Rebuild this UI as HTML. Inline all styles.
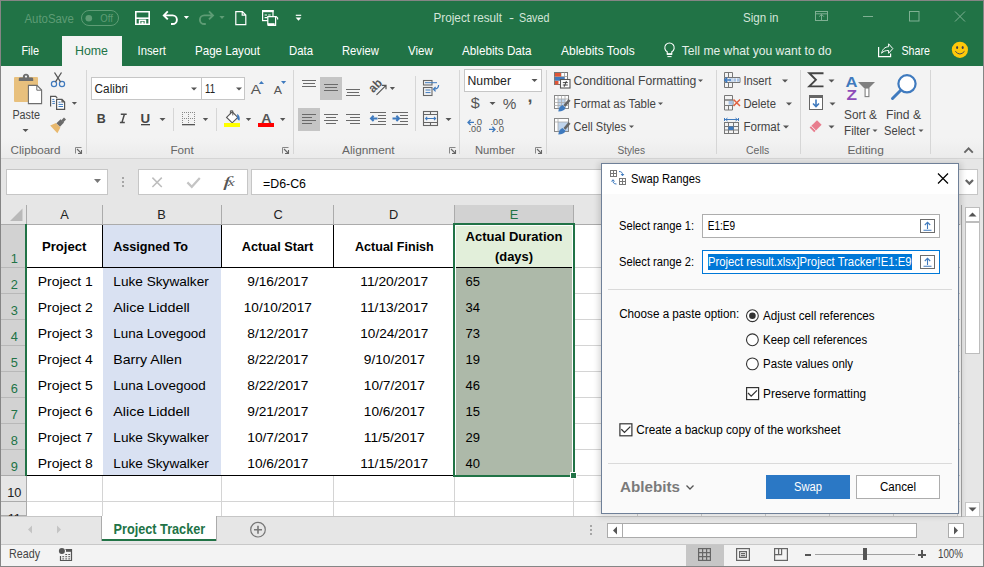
<!DOCTYPE html>
<html><head><meta charset="utf-8"><title>Excel - Swap Ranges</title>
<style>html,body{margin:0;padding:0;background:#fff;overflow:hidden}svg{display:block}text{font-family:"Liberation Sans",sans-serif;white-space:pre}</style>
</head><body>
<svg width="984" height="567" viewBox="0 0 984 567" shape-rendering="auto">
<rect x="0" y="0" width="984" height="567" fill="#858585" />
<rect x="1" y="1" width="982" height="65" fill="#217346" />
<text x="24.5" y="22.9" font-size="12.2" fill="#5E9C75" textLength="49.4" lengthAdjust="spacingAndGlyphs" >AutoSave</text>
<rect x="81.5" y="10.5" width="37" height="15" rx="7.5" fill="none" stroke="#5E9C75" stroke-width="1"/>
<circle cx="88.8" cy="18.2" r="3.3" fill="#5E9C75"/>
<text x="100.2" y="21.8" font-size="10" fill="#5E9C75" textLength="12.6" lengthAdjust="spacingAndGlyphs" >Off</text>
<g fill="none" stroke="#fff" stroke-width="1.6"><path d="M135.8 11.8h13.4v12.4h-13.4z"/><path d="M135.8 18.2h13.4"/><path d="M139.6 24.2v-4h5.8v4"/></g><rect x="141.4" y="21.6" width="2.2" height="2.6" fill="#fff"/>
<path d="M167.8 11.4 l-4 4 l4 4 M164 15.4 h8.6 a4.3 4.3 0 0 1 0 8.6 h-1.6" fill="none" stroke="#fff" stroke-width="1.9"/>
<path d="M183.8 16h5.2l-2.6 3z" fill="#fff"/>
<path d="M209 11.4 l4 4 l-4 4 M212.8 15.4 h-8.6 a4.3 4.3 0 0 0 0 8.6 h1.6" fill="none" stroke="#5E9C75" stroke-width="1.9"/>
<path d="M219.4 16h5.2l-2.6 3z" fill="#5E9C75"/>
<path d="M235.8 11.6h6.6l3.4 3.4v9.6h-10z M242.2 11.6v3.6h3.6" fill="none" stroke="#fff" stroke-width="1.2"/>
<g fill="none" stroke="#fff" stroke-width="1.2"><rect x="262.6" y="10.6" width="10.4" height="10"/><path d="M264.6 15h2.5 M268.2 15h2.5 M264.6 17.6h3"/></g><rect x="262" y="10" width="11.6" height="2.2" fill="#fff"/><path d="M267.8 24.8v-8.2h8.4l1.4 1.4v1.4" fill="#217346" stroke="#fff" stroke-width="1.2"/><path d="M275.6 17v8.4h-8" fill="none" stroke="#fff" stroke-width="1.2"/><rect x="267.6" y="23.2" width="7" height="2.2" fill="#fff"/>
<path d="M295.8 15.3h5.4" stroke="#fff" stroke-width="1.2"/><path d="M295.6 17.6h5.8l-2.9 3.2z" fill="#fff"/>
<text x="433.5" y="21.8" font-size="12.4" fill="#D3E5D9" textLength="68.5" lengthAdjust="spacingAndGlyphs" >Project result</text>
<text x="509" y="21.8" font-size="12.4" fill="#D3E5D9" textLength="5" lengthAdjust="spacingAndGlyphs" >-</text>
<text x="519" y="21.8" font-size="12.4" fill="#D3E5D9" textLength="30.4" lengthAdjust="spacingAndGlyphs" >Saved</text>
<text x="743" y="21.5" font-size="12.4" fill="#D3E5D9" textLength="35.5" lengthAdjust="spacingAndGlyphs" >Sign in</text>
<g fill="none" stroke="#7FB093" stroke-width="1"><rect x="815.5" y="11.5" width="12" height="9"/><path d="M815.5 13.8h12 M821.5 20.5v-6.2 M819.2 16.6l2.3-2.3 2.3 2.3"/></g>
<path d="M863 16.5h10" stroke="#7FB093" stroke-width="1"/>
<rect x="909.5" y="11.5" width="9.5" height="9.5" fill="none" stroke="#7FB093" stroke-width="1"/>
<path d="M955 11.5l10 10 M965 11.5l-10 10" stroke="#7FB093" stroke-width="1"/>
<rect x="62" y="36" width="60" height="30" fill="#F3F3F3" />
<text x="21.4" y="55.1" font-size="13" fill="#FFFFFF" textLength="17.6" lengthAdjust="spacingAndGlyphs" >File</text>
<text x="137.5" y="55.1" font-size="13" fill="#FFFFFF" textLength="28.3" lengthAdjust="spacingAndGlyphs" >Insert</text>
<text x="195" y="55.1" font-size="13" fill="#FFFFFF" textLength="65" lengthAdjust="spacingAndGlyphs" >Page Layout</text>
<text x="289" y="55.1" font-size="13" fill="#FFFFFF" textLength="24" lengthAdjust="spacingAndGlyphs" >Data</text>
<text x="342" y="55.1" font-size="13" fill="#FFFFFF" textLength="36.8" lengthAdjust="spacingAndGlyphs" >Review</text>
<text x="408" y="55.1" font-size="13" fill="#FFFFFF" textLength="24.8" lengthAdjust="spacingAndGlyphs" >View</text>
<text x="462" y="55.1" font-size="13" fill="#FFFFFF" textLength="69.6" lengthAdjust="spacingAndGlyphs" >Ablebits Data</text>
<text x="561" y="55.1" font-size="13" fill="#FFFFFF" textLength="73.7" lengthAdjust="spacingAndGlyphs" >Ablebits Tools</text>
<text x="75" y="55.1" font-size="13" fill="#217346" textLength="33" lengthAdjust="spacingAndGlyphs" >Home</text>
<g fill="none" stroke="#fff" stroke-width="1.1"><path d="M667.2 54.2v-2.4a4.7 4.7 0 1 1 4.6 0v2.4z"/></g><rect x="667" y="53.2" width="5" height="1.6" fill="#fff"/><path d="M667.4 56.6h4.2" stroke="#fff" stroke-width="1"/>
<text x="681.8" y="55.1" font-size="13" fill="#E4EFE8" textLength="149.8" lengthAdjust="spacingAndGlyphs" >Tell me what you want to do</text>
<g fill="none" stroke="#fff"><path d="M878.6 47v9.6h12v-3.2" stroke-width="1.2"/><path d="M881.6 53.2C882.6 49 885 46.9 888.6 46.7V43.8L892.8 48.6 888.6 53.3V50.5C885.6 50.4 883.2 51.3 881.6 53.2z" stroke-width="1"/></g>
<text x="901.5" y="55.1" font-size="13" fill="#FFFFFF" textLength="28.5" lengthAdjust="spacingAndGlyphs" >Share</text>
<circle cx="959.9" cy="49.8" r="8.1" fill="#FFC80A"/><ellipse cx="957.1" cy="47.6" rx="1" ry="1.5" fill="#3C3C50"/><ellipse cx="962.7" cy="47.6" rx="1" ry="1.5" fill="#3C3C50"/><path d="M955.3 51.3q4.6 5.4 9.2 0" fill="none" stroke="#4A4A50" stroke-width="1"/>
<rect x="1" y="66" width="982" height="92" fill="#F3F3F3" />
<defs><linearGradient id="rg" x1="0" y1="0" x2="0" y2="1"><stop offset="0" stop-color="#F3F3F3"/><stop offset="1" stop-color="#EBEBEB"/></linearGradient></defs><rect x="1" y="138" width="982" height="20" fill="url(#rg)"/>
<rect x="1" y="158" width="982" height="1" fill="#D5D5D5" />
<rect x="86" y="70" width="1" height="84" fill="#D6D6D6" />
<rect x="293" y="70" width="1" height="84" fill="#D6D6D6" />
<rect x="459" y="70" width="1" height="84" fill="#D6D6D6" />
<rect x="546" y="70" width="1" height="84" fill="#D6D6D6" />
<rect x="716" y="70" width="1" height="84" fill="#D6D6D6" />
<rect x="800" y="70" width="1" height="84" fill="#D6D6D6" />
<rect x="930" y="70" width="1" height="84" fill="#D6D6D6" />
<rect x="14" y="77" width="24" height="25" fill="#E8C07D" rx="1"/>
<path d="M18.8 81v-2.2q0-1.4 1.4-1.4h2.6q0-3.6 3.2-3.6t3.2 3.6h2.6q1.4 0 1.4 1.4v2.2z" fill="#6D6D6D"/><circle cx="26" cy="76.6" r="1.1" fill="#F3F3F3"/>
<path d="M28.4 85.4h8.6l4.6 4.6v13.6h-13.2z" fill="#FFFFFF" stroke="#6D6D6D" stroke-width="1.1"/><path d="M36.8 85.6v4.6h4.6" fill="none" stroke="#6D6D6D" stroke-width="1"/>
<text x="12.4" y="118.7" font-size="12.5" fill="#444444" textLength="27.6" lengthAdjust="spacingAndGlyphs" >Paste</text>
<path d="M22.5 129h6l-3 3z" fill="#555"/>
<g fill="none" stroke="#3F7ABE" stroke-width="1.2"><circle cx="54" cy="84" r="2.6"/><circle cx="62" cy="84" r="2.6"/></g><path d="M55.5 81.8 L61.5 72.5 M60.5 81.8 L54.5 72.5" stroke="#555" stroke-width="1.3"/>
<path d="M50.6 106.4v-10h5l1.6 1.6" fill="#fff" stroke="#555" stroke-width="1.2"/><path d="M56.6 109.4v-10h5.4l2.6 2.6v7.4z M62 99.4v2.6h2.6" fill="#fff" stroke="#555" stroke-width="1.2"/>
<path d="M52.3 99.4h2 M52.3 101.4h2.6 M52.3 103.4h2.6 M58.5 102.2h2 M58.5 104.4h4.6 M58.5 106.5h4.6" stroke="#3F7ABE" stroke-width="1"/>
<path d="M71.8 102h5.2l-2.6 2.8z" fill="#555"/>
<path d="M50.2 125.6l5.8-2.6 4.4 4.4-3 5.8z" fill="#E8B86D"/><path d="M56.4 123.2l4.2-4 3.4 3.4-4 4.2z" fill="#6A6A6A"/><path d="M61.4 120.2l2.6-2.6 2 2-2.6 2.6z" fill="#6A6A6A"/>
<text x="10.6" y="153.9" font-size="11.7" fill="#666666" textLength="49.9" lengthAdjust="spacingAndGlyphs" >Clipboard</text>
<path d="M75.5 153.5v-6h6" fill="none" stroke="#888" stroke-width="1"/><path d="M77 149l4 4 M81.5 150v3.5h-3.5" fill="none" stroke="#666" stroke-width="1.1"/>
<rect x="91.5" y="77.5" width="110" height="22" fill="#FFFFFF" stroke="#C6C6C6" stroke-width="1" />
<rect x="201.5" y="77.5" width="43" height="22" fill="#FFFFFF" stroke="#C6C6C6" stroke-width="1" />
<text x="94.6" y="93" font-size="12.5" fill="#222" textLength="33.4" lengthAdjust="spacingAndGlyphs" >Calibri</text>
<path d="M191 87.5h6l-3 3z" fill="#555"/>
<text x="205" y="93" font-size="12.5" fill="#222" textLength="10" lengthAdjust="spacingAndGlyphs" >11</text>
<path d="M236 87.5h6l-3 3z" fill="#555"/>
<text x="250.8" y="93.8" font-size="13.6" fill="#555" textLength="10.2" lengthAdjust="spacingAndGlyphs" >A</text>
<path d="M258.8 84h5.2l-2.6-3z" fill="#3F7ABE"/>
<text x="273.8" y="93.8" font-size="10.8" fill="#555" textLength="8.2" lengthAdjust="spacingAndGlyphs" >A</text>
<path d="M281 81h5.2l-2.6 3z" fill="#3F7ABE"/>
<text x="96.8" y="123.2" font-size="13" fill="#444" font-weight="700" textLength="9" lengthAdjust="spacingAndGlyphs" >B</text>
<path d="M120.8 114.2h5.9 M119.9 122.6h4.9 M124.4 114.2l-2.5 8.4" fill="none" stroke="#4A4A4A" stroke-width="1.5"/>
<text x="140.6" y="122.6" font-size="13" fill="#444" font-weight="700" textLength="9.6" lengthAdjust="spacingAndGlyphs" >U</text>
<rect x="141" y="124" width="9" height="1.3" fill="#444" />
<path d="M159.5 118h6l-3 3z" fill="#555"/>
<rect x="173" y="108" width="1" height="23" fill="#D6D6D6" />
<rect x="182" y="112" width="1" height="1" fill="#8A8A8A" />
<rect x="184" y="112" width="1" height="1" fill="#8A8A8A" />
<rect x="186" y="112" width="1" height="1" fill="#8A8A8A" />
<rect x="188" y="112" width="1" height="1" fill="#8A8A8A" />
<rect x="190" y="112" width="1" height="1" fill="#8A8A8A" />
<rect x="192" y="112" width="1" height="1" fill="#8A8A8A" />
<rect x="194" y="112" width="1" height="1" fill="#8A8A8A" />
<rect x="182" y="114" width="1" height="1" fill="#8A8A8A" />
<rect x="188" y="114" width="1" height="1" fill="#8A8A8A" />
<rect x="194" y="114" width="1" height="1" fill="#8A8A8A" />
<rect x="182" y="116" width="1" height="1" fill="#8A8A8A" />
<rect x="188" y="116" width="1" height="1" fill="#8A8A8A" />
<rect x="194" y="116" width="1" height="1" fill="#8A8A8A" />
<rect x="182" y="118" width="1" height="1" fill="#8A8A8A" />
<rect x="184" y="118" width="1" height="1" fill="#8A8A8A" />
<rect x="186" y="118" width="1" height="1" fill="#8A8A8A" />
<rect x="188" y="118" width="1" height="1" fill="#8A8A8A" />
<rect x="190" y="118" width="1" height="1" fill="#8A8A8A" />
<rect x="192" y="118" width="1" height="1" fill="#8A8A8A" />
<rect x="194" y="118" width="1" height="1" fill="#8A8A8A" />
<rect x="182" y="120" width="1" height="1" fill="#8A8A8A" />
<rect x="188" y="120" width="1" height="1" fill="#8A8A8A" />
<rect x="194" y="120" width="1" height="1" fill="#8A8A8A" />
<rect x="182" y="122" width="1" height="1" fill="#8A8A8A" />
<rect x="188" y="122" width="1" height="1" fill="#8A8A8A" />
<rect x="194" y="122" width="1" height="1" fill="#8A8A8A" />
<rect x="182" y="124" width="1" height="1" fill="#8A8A8A" />
<rect x="184" y="124" width="1" height="1" fill="#8A8A8A" />
<rect x="186" y="124" width="1" height="1" fill="#8A8A8A" />
<rect x="188" y="124" width="1" height="1" fill="#8A8A8A" />
<rect x="190" y="124" width="1" height="1" fill="#8A8A8A" />
<rect x="192" y="124" width="1" height="1" fill="#8A8A8A" />
<rect x="194" y="124" width="1" height="1" fill="#8A8A8A" />
<rect x="182" y="124" width="13" height="1.3" fill="#555" />
<path d="M202.8 118h5.4l-2.7 3z" fill="#555"/>
<rect x="216" y="108" width="1" height="23" fill="#D6D6D6" />
<path d="M226.6 117.4l5.6-5.6 5.6 5.6-5.6 5.4z" fill="#fff" stroke="#555" stroke-width="1.1"/><path d="M230.4 114.2v-3.4h2.4v4.6" fill="none" stroke="#555" stroke-width="1"/><path d="M237.2 113.8q3.2 2.2 2.4 6.6q-2.6-0.4-2.4-3z" fill="#3F7ABE"/>
<rect x="224" y="123" width="16" height="4" fill="#FFFF00" />
<path d="M245.8 118h5.4l-2.7 3z" fill="#555"/>
<text x="261.2" y="122.6" font-size="13.5" fill="#555" font-weight="700" textLength="10.2" lengthAdjust="spacingAndGlyphs" >A</text>
<rect x="258" y="123" width="16" height="4" fill="#FF0000" />
<path d="M280 118h5.4l-2.7 3z" fill="#555"/>
<text x="170.4" y="153.9" font-size="11.7" fill="#666666" textLength="23.4" lengthAdjust="spacingAndGlyphs" >Font</text>
<path d="M282.5 153.5v-6h6" fill="none" stroke="#888" stroke-width="1"/><path d="M284 149l4 4 M288.5 150v3.5h-3.5" fill="none" stroke="#666" stroke-width="1.1"/>
<rect x="320" y="77" width="22" height="23" fill="#C5C5C5" />
<rect x="298" y="108" width="22" height="23" fill="#C5C5C5" />
<rect x="302" y="80" width="14" height="1" fill="#6A6A6A" />
<rect x="303" y="83" width="12" height="1" fill="#6A6A6A" />
<rect x="302" y="86" width="14" height="1" fill="#6A6A6A" />
<rect x="324" y="84" width="14" height="1" fill="#6A6A6A" />
<rect x="325" y="87" width="12" height="1" fill="#6A6A6A" />
<rect x="324" y="90" width="14" height="1" fill="#6A6A6A" />
<rect x="346" y="89" width="14" height="1" fill="#6A6A6A" />
<rect x="347" y="92" width="12" height="1" fill="#6A6A6A" />
<rect x="346" y="95" width="14" height="1" fill="#6A6A6A" />
<text x="368.2" y="90.2" font-size="12.5" fill="#555" font-weight="700" textLength="13.5" lengthAdjust="spacingAndGlyphs" transform="rotate(-45 374.5 85.5)">ab</text>
<path d="M376.5 94.8l9.2-9.2 M382 85.3h4v4" fill="none" stroke="#555" stroke-width="1.2"/>
<path d="M389.8 87h5.2l-2.6 2.9z" fill="#555"/>
<rect x="302" y="114" width="14" height="1" fill="#6A6A6A" />
<rect x="324" y="114" width="14" height="1" fill="#6A6A6A" />
<rect x="346" y="114" width="14" height="1" fill="#6A6A6A" />
<rect x="302" y="117" width="10" height="1" fill="#6A6A6A" />
<rect x="326" y="117" width="10" height="1" fill="#6A6A6A" />
<rect x="350" y="117" width="10" height="1" fill="#6A6A6A" />
<rect x="302" y="120" width="14" height="1" fill="#6A6A6A" />
<rect x="324" y="120" width="14" height="1" fill="#6A6A6A" />
<rect x="346" y="120" width="14" height="1" fill="#6A6A6A" />
<rect x="302" y="123" width="10" height="1" fill="#6A6A6A" />
<rect x="326" y="123" width="10" height="1" fill="#6A6A6A" />
<rect x="350" y="123" width="10" height="1" fill="#6A6A6A" />
<rect x="370" y="112" width="16" height="1" fill="#6A6A6A" />
<rect x="392" y="112" width="16" height="1" fill="#6A6A6A" />
<rect x="378" y="115" width="8" height="1" fill="#6A6A6A" />
<rect x="400" y="115" width="8" height="1" fill="#6A6A6A" />
<rect x="378" y="118" width="8" height="1" fill="#6A6A6A" />
<rect x="400" y="118" width="8" height="1" fill="#6A6A6A" />
<rect x="378" y="121" width="8" height="1" fill="#6A6A6A" />
<rect x="400" y="121" width="8" height="1" fill="#6A6A6A" />
<rect x="370" y="124" width="16" height="1" fill="#6A6A6A" />
<rect x="392" y="124" width="16" height="1" fill="#6A6A6A" />
<path d="M377.5 118.4h-6 M373.6 115.8l-2.6 2.6 2.6 2.6" fill="none" stroke="#3F7ABE" stroke-width="2"/>
<path d="M392.5 118.4h6 M396.4 115.8l2.6 2.6-2.6 2.6" fill="none" stroke="#3F7ABE" stroke-width="2"/>
<rect x="415" y="76" width="1" height="55" fill="#D6D6D6" />
<g fill="none" stroke="#666" stroke-width="1.1"><rect x="423.5" y="80.5" width="8.5" height="4.5"/><rect x="423.5" y="87.5" width="8.5" height="8"/></g><path d="M425 82.7h12 M425.5 90h5 M425.5 92.6h5" stroke="#3F7ABE" stroke-width="1"/><path d="M438.6 85q0 4.2-5 4.2 M435.6 87l-2.2 2.2 2.2 2.2" fill="none" stroke="#3F7ABE" stroke-width="1.2"/>
<g fill="none" stroke="#666" stroke-width="1.1"><rect x="423.5" y="111.5" width="14" height="14"/><path d="M423.5 114.5h14 M423.5 122.5h14 M430.5 111.5v3 M430.5 122.5v3"/></g><path d="M425.6 118.5h10 M427.2 116.9l-1.6 1.6 1.6 1.6 M434 116.9l1.6 1.6-1.6 1.6" fill="none" stroke="#3F7ABE" stroke-width="1.1"/>
<path d="M445.5 118h6l-3 3z" fill="#555"/>
<text x="342" y="153.9" font-size="11.7" fill="#666666" textLength="52.6" lengthAdjust="spacingAndGlyphs" >Alignment</text>
<path d="M449.5 153.5v-6h6" fill="none" stroke="#888" stroke-width="1"/><path d="M451 149l4 4 M455.5 150v3.5h-3.5" fill="none" stroke="#666" stroke-width="1.1"/>
<rect x="464.5" y="69.5" width="77" height="22" fill="#FFFFFF" stroke="#C6C6C6" stroke-width="1" />
<text x="467.5" y="85" font-size="12.5" fill="#222" textLength="43.5" lengthAdjust="spacingAndGlyphs" >Number</text>
<path d="M531.5 79h6l-3 3z" fill="#555"/>
<text x="470.8" y="108.2" font-size="15" fill="#555" textLength="9" lengthAdjust="spacingAndGlyphs" >$</text>
<path d="M489.5 102h6l-3 3z" fill="#555"/>
<text x="502.8" y="109" font-size="14.8" fill="#555" textLength="13.6" lengthAdjust="spacingAndGlyphs" >%</text>
<text x="527.6" y="102.4" font-size="16" fill="#555" font-weight="700" textLength="5" lengthAdjust="spacingAndGlyphs" >,</text>
<text x="474" y="124.6" font-size="9.8" fill="#555" textLength="8" lengthAdjust="spacingAndGlyphs" >.0</text>
<text x="468.6" y="131.8" font-size="9.8" fill="#555" textLength="12.6" lengthAdjust="spacingAndGlyphs" >.00</text>
<path d="M474 122.4h-6 M470.6 119.8l-2.6 2.6 2.6 2.6" fill="none" stroke="#3F7ABE" stroke-width="1.3"/>
<text x="490.6" y="124.6" font-size="9.8" fill="#555" textLength="12.6" lengthAdjust="spacingAndGlyphs" >.00</text>
<text x="496" y="131.8" font-size="9.8" fill="#555" textLength="8" lengthAdjust="spacingAndGlyphs" >.0</text>
<path d="M489 129.4h6 M492.4 126.8l2.6 2.6-2.6 2.6" fill="none" stroke="#3F7ABE" stroke-width="1.3"/>
<text x="475" y="153.9" font-size="11.7" fill="#666666" textLength="40" lengthAdjust="spacingAndGlyphs" >Number</text>
<path d="M535.5 153.5v-6h6" fill="none" stroke="#888" stroke-width="1"/><path d="M537 149l4 4 M541.5 150v3.5h-3.5" fill="none" stroke="#666" stroke-width="1.1"/>
<rect x="554.5" y="72.5" width="13" height="12" fill="#fff" stroke="#777" stroke-width="1"/><path d="M554.5 76.5h13 M554.5 80.5h13 M561 72.5v12 M564.5 72.5v12" stroke="#999" stroke-width="0.8"/><rect x="555" y="73" width="6" height="3.5" fill="#E05536"/><rect x="555" y="77" width="9.5" height="3.5" fill="#3F7ABE"/><rect x="555" y="81" width="3.5" height="3.5" fill="#E05536"/><rect x="560.5" y="79.5" width="9.5" height="8.5" fill="#fff" stroke="#555" stroke-width="1.1"/><path d="M562.8 82.6h5 M562.8 85h5 M566.4 81l-2.2 5.8" stroke="#333" stroke-width="0.9"/>
<text x="573.6" y="84.7" font-size="12.5" fill="#444444" textLength="122.7" lengthAdjust="spacingAndGlyphs" >Conditional Formatting</text>
<path d="M698 79.5h5l-2.5 2.5z" fill="#555"/>
<rect x="554.5" y="95.5" width="14" height="13" fill="#fff" stroke="#888" stroke-width="1"/><rect x="558" y="99" width="7.5" height="9" fill="#BFD4EC"/><path d="M554.5 99h14 M554.5 102.5h14 M554.5 105.5h14 M558 95.5v13 M561.5 95.5v13 M565 95.5v13" stroke="#AAA" stroke-width="0.8"/><path d="M563.5 105l5-6 2 1.8-5 6z" fill="#666"/><path d="M558.3 111.5q0.5-5 4.2-6.4l3 2.6q-1.2 3.8-7.2 3.8z" fill="#3F7ABE"/>
<text x="573.6" y="107.8" font-size="12.5" fill="#444444" textLength="82.4" lengthAdjust="spacingAndGlyphs" >Format as Table</text>
<path d="M658 102.5h5l-2.5 2.5z" fill="#555"/>
<rect x="554.5" y="118.5" width="14" height="13" fill="#fff" stroke="#888" stroke-width="1"/><rect x="558" y="122" width="10" height="9" fill="#BFD4EC"/><path d="M554.5 122h14 M558 118.5v13" stroke="#AAA" stroke-width="0.8"/><path d="M563.5 128l5-6 2 1.8-5 6z" fill="#666"/><path d="M558.3 134.5q0.5-5 4.2-6.4l3 2.6q-1.2 3.8-7.2 3.8z" fill="#3F7ABE"/>
<text x="573.6" y="130.6" font-size="12.5" fill="#444444" textLength="52.4" lengthAdjust="spacingAndGlyphs" >Cell Styles</text>
<path d="M629 125.5h5l-2.5 2.5z" fill="#555"/>
<text x="617.4" y="153.9" font-size="11.7" fill="#666666" textLength="27.6" lengthAdjust="spacingAndGlyphs" >Styles</text>
<g fill="none" stroke="#777" stroke-width="1"><path d="M724.5 72.5h8v5h-8z M724.5 82.5h8v5h-8z M728.5 72.5v5 M728.5 82.5v5"/><path d="M724.5 77.5v5 h15.5 v-5z" stroke="#777"/></g><rect x="729" y="78" width="4" height="4" fill="#C9D9EE"/><rect x="733.5" y="78.4" width="2.6" height="3.2" fill="#A8C3E6"/><rect x="737" y="78.4" width="2.6" height="3.2" fill="#A8C3E6"/><path d="M731 80h-6 M727.2 77.6l-2.4 2.4 2.4 2.4" fill="none" stroke="#3F7ABE" stroke-width="1.5"/>
<text x="743.4" y="85" font-size="12.5" fill="#444444" textLength="28" lengthAdjust="spacingAndGlyphs" >Insert</text>
<path d="M782 79.5h6l-3 3z" fill="#555"/>
<g fill="none" stroke="#777" stroke-width="1"><path d="M724.5 95.5h8v4.5h-8z M724.5 105.5h8v4.5h-8z M728.5 105.5v4.5"/><path d="M724.5 100v5.5h8.5v-5.5z"/></g><rect x="728.6" y="101" width="4" height="3.6" fill="#A8C3E6"/><path d="M733.5 99.5l6.5 6.5 M740 99.5l-6.5 6.5" stroke="#E0603F" stroke-width="1.5"/>
<text x="743.4" y="108" font-size="12.5" fill="#444444" textLength="32.6" lengthAdjust="spacingAndGlyphs" >Delete</text>
<path d="M786 102.5h6l-3 3z" fill="#555"/>
<g fill="none" stroke="#777" stroke-width="1"><rect x="724.5" y="122.5" width="14" height="11"/><path d="M724.5 126.5h14 M724.5 130h14 M728.5 122.5v11 M733.5 122.5v11"/></g><rect x="728.5" y="126.5" width="5" height="3.5" fill="#3F7ABE"/><path d="M725 119.5h13" stroke="#3F7ABE" stroke-width="1"/><path d="M724.5 118v3 M738.5 118v3" stroke="#3F7ABE" stroke-width="1"/><path d="M727.5 118l-2 1.5 2 1.5 M735.5 118l2 1.5-2 1.5" fill="none" stroke="#3F7ABE" stroke-width="0.9"/>
<text x="743.4" y="131" font-size="12.5" fill="#444444" textLength="36.6" lengthAdjust="spacingAndGlyphs" >Format</text>
<path d="M783 125.5h6l-3 3z" fill="#555"/>
<text x="746" y="153.9" font-size="11.7" fill="#666666" textLength="23.3" lengthAdjust="spacingAndGlyphs" >Cells</text>
<path d="M823.5 73.2h-14.2l6.6 6.6-6.6 6.6h14.2" fill="none" stroke="#444" stroke-width="1.9"/>
<path d="M828.5 79.5h6l-3 3z" fill="#555"/>
<rect x="809.5" y="95.5" width="13" height="14" fill="#fff" stroke="#666" stroke-width="1"/><rect x="809" y="95" width="14" height="3" fill="#666"/><path d="M816 99.5v7 M813 103.5l3 3 3-3" fill="none" stroke="#3F7ABE" stroke-width="1.6"/>
<path d="M829.5 102.5h6l-3 3z" fill="#555"/>
<path d="M809.6 127.6l7.4-7.4 4.6 4.6-7.4 7.4z" fill="#E87D8E"/><path d="M811.2 126l4.6 4.6" stroke="#F3F3F3" stroke-width="1"/>
<path d="M828.5 125.5h6l-3 3z" fill="#555"/>
<text x="845.6" y="86.6" font-size="14" fill="#3F7ABE" font-weight="700" textLength="12" lengthAdjust="spacingAndGlyphs" >A</text>
<text x="846.4" y="100.4" font-size="14" fill="#8E4CB8" font-weight="700" textLength="10.5" lengthAdjust="spacingAndGlyphs" >Z</text>
<path d="M858 82h17l-6 6h-5z" fill="#808080"/><rect x="865.1" y="88" width="3.8" height="8.6" fill="#fff" stroke="#808080" stroke-width="1.1"/>
<text x="844" y="119" font-size="12.5" fill="#444444" textLength="33" lengthAdjust="spacingAndGlyphs" >Sort &amp;</text>
<text x="844" y="134.6" font-size="12.5" fill="#444444" textLength="26" lengthAdjust="spacingAndGlyphs" >Filter</text>
<path d="M872.5 129.5h5l-2.5 2.5z" fill="#555"/>
<circle cx="907" cy="83.8" r="8.6" fill="#fff" stroke="#3F7ABE" stroke-width="2.2"/><path d="M900.5 90.5l-8 8" stroke="#3F7ABE" stroke-width="3" stroke-linecap="round"/>
<text x="886" y="119" font-size="12.5" fill="#444444" textLength="35" lengthAdjust="spacingAndGlyphs" >Find &amp;</text>
<text x="884" y="134.6" font-size="12.5" fill="#444444" textLength="31" lengthAdjust="spacingAndGlyphs" >Select</text>
<path d="M918.5 129.5h5l-2.5 2.5z" fill="#555"/>
<text x="847.4" y="153.9" font-size="11.7" fill="#666666" textLength="36.5" lengthAdjust="spacingAndGlyphs" >Editing</text>
<path d="M964.4 152.6l4.2-4.2 4.2 4.2" fill="none" stroke="#666" stroke-width="1.9"/>
<rect x="1" y="159" width="982" height="357" fill="#E6E6E6" />
<rect x="6.5" y="169.5" width="101" height="25" fill="#FFFFFF" stroke="#C6C6C6" stroke-width="1" />
<path d="M94 179h7l-3.5 4z" fill="#777"/>
<rect x="122" y="177" width="2" height="2" fill="#A6A6A6" />
<rect x="122" y="181" width="2" height="2" fill="#A6A6A6" />
<rect x="122" y="185" width="2" height="2" fill="#A6A6A6" />
<rect x="138.5" y="169.5" width="109" height="25" fill="#FFFFFF" stroke="#C6C6C6" stroke-width="1" />
<path d="M152.4 177.6l9.4 9.4 M161.8 177.6l-9.4 9.4" stroke="#BDBDBD" stroke-width="1.5"/>
<path d="M187.4 182.4l4.4 4.4 8-8.8" fill="none" stroke="#C4C4C4" stroke-width="2.2"/>
<text x="223" y="187" font-size="14.5" fill="#555" textLength="7.5" lengthAdjust="spacingAndGlyphs" style="font-family:'Liberation Serif';font-style:italic">f</text>
<text x="227.8" y="186.4" font-size="11" fill="#555" textLength="7" lengthAdjust="spacingAndGlyphs" style="font-family:'Liberation Serif';font-style:italic">x</text>
<rect x="251.5" y="169.5" width="726" height="25" fill="#FFFFFF" stroke="#C6C6C6" stroke-width="1" />
<text x="263" y="187.5" font-size="13" fill="#000" textLength="43" lengthAdjust="spacingAndGlyphs" >=D6-C6</text>
<path d="M965.8 180l3.6 3.6 3.6-3.6" fill="none" stroke="#666" stroke-width="2.2"/>
<rect x="1" y="205" width="960" height="19" fill="#E6E6E6" />
<rect x="455" y="205" width="118" height="19" fill="#D2D2D2" />
<path d="M22.5 221H10L22.5 208.5z" fill="#B9B9B9"/>
<rect x="26" y="205" width="1" height="19" fill="#ABABAB" />
<rect x="102" y="205" width="1" height="19" fill="#ABABAB" />
<rect x="221" y="205" width="1" height="19" fill="#ABABAB" />
<rect x="333" y="205" width="1" height="19" fill="#ABABAB" />
<rect x="454" y="205" width="1" height="19" fill="#ABABAB" />
<rect x="573" y="205" width="1" height="19" fill="#ABABAB" />
<rect x="1" y="224" width="959" height="1" fill="#ABABAB" />
<text x="64.5" y="219" font-size="12.8" fill="#222" text-anchor="middle" >A</text>
<text x="161.5" y="219" font-size="12.8" fill="#222" text-anchor="middle" >B</text>
<text x="278" y="219" font-size="12.8" fill="#222" text-anchor="middle" >C</text>
<text x="393.5" y="219" font-size="12.8" fill="#222" text-anchor="middle" >D</text>
<text x="514" y="219" font-size="12.8" fill="#217346" text-anchor="middle" >E</text>
<rect x="27" y="225" width="934" height="291" fill="#FFFFFF" />
<rect x="1" y="225" width="25" height="291" fill="#E6E6E6" />
<rect x="1" y="225" width="24" height="251" fill="#D2D2D2" />
<rect x="1" y="267" width="24" height="1" fill="#B8B8B8" />
<rect x="1" y="293" width="24" height="1" fill="#B8B8B8" />
<rect x="1" y="319" width="24" height="1" fill="#B8B8B8" />
<rect x="1" y="345" width="24" height="1" fill="#B8B8B8" />
<rect x="1" y="371" width="24" height="1" fill="#B8B8B8" />
<rect x="1" y="397" width="24" height="1" fill="#B8B8B8" />
<rect x="1" y="423" width="24" height="1" fill="#B8B8B8" />
<rect x="1" y="449" width="24" height="1" fill="#B8B8B8" />
<rect x="1" y="475" width="25" height="1" fill="#ABABAB" />
<rect x="1" y="501" width="25" height="1" fill="#ABABAB" />
<rect x="1" y="515" width="25" height="1" fill="#ABABAB" />
<rect x="26" y="225" width="1" height="291" fill="#ABABAB" />
<rect x="27" y="267" width="933" height="1" fill="#D4D4D4" />
<rect x="27" y="293" width="933" height="1" fill="#D4D4D4" />
<rect x="27" y="319" width="933" height="1" fill="#D4D4D4" />
<rect x="27" y="345" width="933" height="1" fill="#D4D4D4" />
<rect x="27" y="371" width="933" height="1" fill="#D4D4D4" />
<rect x="27" y="397" width="933" height="1" fill="#D4D4D4" />
<rect x="27" y="423" width="933" height="1" fill="#D4D4D4" />
<rect x="27" y="449" width="933" height="1" fill="#D4D4D4" />
<rect x="27" y="475" width="933" height="1" fill="#D4D4D4" />
<rect x="27" y="501" width="933" height="1" fill="#D4D4D4" />
<rect x="102" y="225" width="1" height="291" fill="#D4D4D4" />
<rect x="221" y="225" width="1" height="291" fill="#D4D4D4" />
<rect x="333" y="225" width="1" height="291" fill="#D4D4D4" />
<rect x="454" y="225" width="1" height="291" fill="#D4D4D4" />
<rect x="573" y="225" width="1" height="291" fill="#D4D4D4" />
<rect x="637" y="225" width="1" height="291" fill="#D4D4D4" />
<rect x="701" y="225" width="1" height="291" fill="#D4D4D4" />
<rect x="765" y="225" width="1" height="291" fill="#D4D4D4" />
<rect x="829" y="225" width="1" height="291" fill="#D4D4D4" />
<rect x="893" y="225" width="1" height="291" fill="#D4D4D4" />
<rect x="957" y="225" width="1" height="291" fill="#D4D4D4" />
<rect x="27" y="225" width="546" height="250" fill="#FFFFFF" />
<rect x="103" y="225" width="118" height="250" fill="#D9E1F2" />
<rect x="455" y="225" width="118" height="42" fill="#E2EFDA" />
<rect x="455" y="268" width="118" height="207" fill="#ADB9A9" />
<rect x="102" y="225" width="1" height="43" fill="#000" />
<rect x="221" y="225" width="1" height="43" fill="#000" />
<rect x="333" y="225" width="1" height="43" fill="#000" />
<rect x="454" y="225" width="1" height="43" fill="#000" />
<rect x="27" y="267" width="546" height="1" fill="#000" />
<rect x="27" y="475" width="427" height="1" fill="#000" />
<rect x="453" y="223" width="122" height="2" fill="#217346" />
<rect x="453" y="223" width="2" height="254" fill="#217346" />
<rect x="573" y="223" width="2" height="254" fill="#217346" />
<rect x="453" y="475" width="118" height="2" fill="#217346" />
<rect x="455" y="225" width="118" height="1" fill="#FFFFFF" />
<rect x="455" y="225" width="1" height="250" fill="#FFFFFF" />
<rect x="572" y="225" width="1" height="250" fill="#FFFFFF" />
<rect x="570" y="472" width="7" height="7" fill="#FFFFFF" />
<rect x="571" y="473" width="5" height="5" fill="#217346" />
<rect x="25" y="224" width="2" height="252" fill="#217346" />
<text x="14.3" y="262.5" font-size="12.8" fill="#217346" text-anchor="middle" >1</text>
<text x="14.3" y="289" font-size="12.8" fill="#217346" text-anchor="middle" >2</text>
<text x="14.3" y="315" font-size="12.8" fill="#217346" text-anchor="middle" >3</text>
<text x="14.3" y="341" font-size="12.8" fill="#217346" text-anchor="middle" >4</text>
<text x="14.3" y="367" font-size="12.8" fill="#217346" text-anchor="middle" >5</text>
<text x="14.3" y="393" font-size="12.8" fill="#217346" text-anchor="middle" >6</text>
<text x="14.3" y="419" font-size="12.8" fill="#217346" text-anchor="middle" >7</text>
<text x="14.3" y="445" font-size="12.8" fill="#217346" text-anchor="middle" >8</text>
<text x="14.3" y="471" font-size="12.8" fill="#217346" text-anchor="middle" >9</text>
<text x="14.3" y="497" font-size="12.8" fill="#222" text-anchor="middle" >10</text>
<text x="14.3" y="523" font-size="12.8" fill="#222" text-anchor="middle" >11</text>
<text x="64.2" y="251.3" font-size="13" fill="#000" font-weight="700" textLength="44.5" lengthAdjust="spacingAndGlyphs" text-anchor="middle" >Project</text>
<text x="113.2" y="251.3" font-size="13" fill="#000" font-weight="700" textLength="74.8" lengthAdjust="spacingAndGlyphs" >Assigned To</text>
<text x="277.5" y="251.3" font-size="13" fill="#000" font-weight="700" textLength="71.6" lengthAdjust="spacingAndGlyphs" text-anchor="middle" >Actual Start</text>
<text x="394.4" y="251.3" font-size="13" fill="#000" font-weight="700" textLength="78.7" lengthAdjust="spacingAndGlyphs" text-anchor="middle" >Actual Finish</text>
<text x="514" y="241" font-size="13" fill="#000" font-weight="700" textLength="97" lengthAdjust="spacingAndGlyphs" text-anchor="middle" >Actual Duration</text>
<text x="514" y="261" font-size="13" fill="#000" font-weight="700" textLength="38" lengthAdjust="spacingAndGlyphs" text-anchor="middle" >(days)</text>
<text x="65.25" y="286" font-size="13.2" fill="#000" textLength="55" lengthAdjust="spacingAndGlyphs" text-anchor="middle" >Project 1</text>
<text x="113.3" y="286" font-size="13.2" fill="#000" textLength="95.5" lengthAdjust="spacingAndGlyphs" >Luke Skywalker</text>
<text x="277.8" y="286" font-size="13.2" fill="#000" textLength="61" lengthAdjust="spacingAndGlyphs" text-anchor="middle" >9/16/2017</text>
<text x="394.3" y="286" font-size="13.2" fill="#000" textLength="68" lengthAdjust="spacingAndGlyphs" text-anchor="middle" >11/20/2017</text>
<text x="465.5" y="286" font-size="13.2" fill="#000" textLength="14.5" lengthAdjust="spacingAndGlyphs" >65</text>
<text x="65.25" y="312" font-size="13.2" fill="#000" textLength="55" lengthAdjust="spacingAndGlyphs" text-anchor="middle" >Project 2</text>
<text x="113.3" y="312" font-size="13.2" fill="#000" textLength="76.5" lengthAdjust="spacingAndGlyphs" >Alice Liddell</text>
<text x="277.8" y="312" font-size="13.2" fill="#000" textLength="68" lengthAdjust="spacingAndGlyphs" text-anchor="middle" >10/10/2017</text>
<text x="394.3" y="312" font-size="13.2" fill="#000" textLength="68" lengthAdjust="spacingAndGlyphs" text-anchor="middle" >11/13/2017</text>
<text x="465.5" y="312" font-size="13.2" fill="#000" textLength="14.5" lengthAdjust="spacingAndGlyphs" >34</text>
<text x="65.25" y="338" font-size="13.2" fill="#000" textLength="55" lengthAdjust="spacingAndGlyphs" text-anchor="middle" >Project 3</text>
<text x="113.3" y="338" font-size="13.2" fill="#000" textLength="92.5" lengthAdjust="spacingAndGlyphs" >Luna Lovegood</text>
<text x="277.8" y="338" font-size="13.2" fill="#000" textLength="61" lengthAdjust="spacingAndGlyphs" text-anchor="middle" >8/12/2017</text>
<text x="394.3" y="338" font-size="13.2" fill="#000" textLength="68" lengthAdjust="spacingAndGlyphs" text-anchor="middle" >10/24/2017</text>
<text x="465.5" y="338" font-size="13.2" fill="#000" textLength="14.5" lengthAdjust="spacingAndGlyphs" >73</text>
<text x="65.25" y="364" font-size="13.2" fill="#000" textLength="55" lengthAdjust="spacingAndGlyphs" text-anchor="middle" >Project 4</text>
<text x="113.3" y="364" font-size="13.2" fill="#000" textLength="68.5" lengthAdjust="spacingAndGlyphs" >Barry Allen</text>
<text x="277.8" y="364" font-size="13.2" fill="#000" textLength="61" lengthAdjust="spacingAndGlyphs" text-anchor="middle" >8/22/2017</text>
<text x="394.3" y="364" font-size="13.2" fill="#000" textLength="61" lengthAdjust="spacingAndGlyphs" text-anchor="middle" >9/10/2017</text>
<text x="465.5" y="364" font-size="13.2" fill="#000" textLength="14.5" lengthAdjust="spacingAndGlyphs" >19</text>
<text x="65.25" y="390" font-size="13.2" fill="#000" textLength="55" lengthAdjust="spacingAndGlyphs" text-anchor="middle" >Project 5</text>
<text x="113.3" y="390" font-size="13.2" fill="#000" textLength="92.5" lengthAdjust="spacingAndGlyphs" >Luna Lovegood</text>
<text x="277.8" y="390" font-size="13.2" fill="#000" textLength="61" lengthAdjust="spacingAndGlyphs" text-anchor="middle" >8/22/2017</text>
<text x="394.3" y="390" font-size="13.2" fill="#000" textLength="61" lengthAdjust="spacingAndGlyphs" text-anchor="middle" >10/7/2017</text>
<text x="465.5" y="390" font-size="13.2" fill="#000" textLength="14.5" lengthAdjust="spacingAndGlyphs" >46</text>
<text x="65.25" y="416" font-size="13.2" fill="#000" textLength="55" lengthAdjust="spacingAndGlyphs" text-anchor="middle" >Project 6</text>
<text x="113.3" y="416" font-size="13.2" fill="#000" textLength="76.5" lengthAdjust="spacingAndGlyphs" >Alice Liddell</text>
<text x="277.8" y="416" font-size="13.2" fill="#000" textLength="61" lengthAdjust="spacingAndGlyphs" text-anchor="middle" >9/21/2017</text>
<text x="394.3" y="416" font-size="13.2" fill="#000" textLength="61" lengthAdjust="spacingAndGlyphs" text-anchor="middle" >10/6/2017</text>
<text x="465.5" y="416" font-size="13.2" fill="#000" textLength="14.5" lengthAdjust="spacingAndGlyphs" >15</text>
<text x="65.25" y="442" font-size="13.2" fill="#000" textLength="55" lengthAdjust="spacingAndGlyphs" text-anchor="middle" >Project 7</text>
<text x="113.3" y="442" font-size="13.2" fill="#000" textLength="95.5" lengthAdjust="spacingAndGlyphs" >Luke Skywalker</text>
<text x="277.8" y="442" font-size="13.2" fill="#000" textLength="61" lengthAdjust="spacingAndGlyphs" text-anchor="middle" >10/7/2017</text>
<text x="394.3" y="442" font-size="13.2" fill="#000" textLength="61" lengthAdjust="spacingAndGlyphs" text-anchor="middle" >11/5/2017</text>
<text x="465.5" y="442" font-size="13.2" fill="#000" textLength="14.5" lengthAdjust="spacingAndGlyphs" >29</text>
<text x="65.25" y="468" font-size="13.2" fill="#000" textLength="55" lengthAdjust="spacingAndGlyphs" text-anchor="middle" >Project 8</text>
<text x="113.3" y="468" font-size="13.2" fill="#000" textLength="95.5" lengthAdjust="spacingAndGlyphs" >Luke Skywalker</text>
<text x="277.8" y="468" font-size="13.2" fill="#000" textLength="61" lengthAdjust="spacingAndGlyphs" text-anchor="middle" >10/6/2017</text>
<text x="394.3" y="468" font-size="13.2" fill="#000" textLength="68" lengthAdjust="spacingAndGlyphs" text-anchor="middle" >11/15/2017</text>
<text x="465.5" y="468" font-size="13.2" fill="#000" textLength="14.5" lengthAdjust="spacingAndGlyphs" >40</text>
<rect x="1" y="516" width="982" height="28" fill="#E6E6E6" />
<rect x="1" y="516" width="982" height="1" fill="#C6C6C6" />
<path d="M32 525.4v8l-4-4z" fill="#C4C4C4"/><path d="M57 525.4v8l4-4z" fill="#C4C4C4"/>
<rect x="101" y="516" width="116" height="25" fill="#FFFFFF" />
<rect x="101" y="516" width="1" height="25" fill="#ABABAB" />
<rect x="216" y="516" width="1" height="25" fill="#ABABAB" />
<rect x="102" y="539" width="114" height="2" fill="#217346" />
<text x="113.6" y="534" font-size="14" fill="#217346" font-weight="700" textLength="91.6" lengthAdjust="spacingAndGlyphs" >Project Tracker</text>
<circle cx="258" cy="529.7" r="7.3" fill="none" stroke="#777" stroke-width="1.2"/><path d="M254 529.7h8 M258 525.7v8" stroke="#777" stroke-width="1.6"/>
<rect x="590" y="525" width="2" height="2" fill="#A6A6A6" />
<rect x="590" y="529" width="2" height="2" fill="#A6A6A6" />
<rect x="590" y="533" width="2" height="2" fill="#A6A6A6" />
<rect x="607.5" y="523.5" width="15" height="14" fill="#FFFFFF" stroke="#ABABAB" stroke-width="1" />
<path d="M613 530.5l4-4v8z" fill="#555"/>
<rect x="622.5" y="523.5" width="294" height="14" fill="#FFFFFF" stroke="#ABABAB" stroke-width="1" />
<rect x="948.5" y="523.5" width="15" height="14" fill="#FFFFFF" stroke="#ABABAB" stroke-width="1" />
<path d="M958 530.5l-4-4v8z" fill="#555"/>
<rect x="1" y="544" width="982" height="22" fill="#F3F3F3" />
<rect x="1" y="544" width="982" height="1" fill="#C8C8C8" />
<text x="9" y="558" font-size="12.2" fill="#444" textLength="31" lengthAdjust="spacingAndGlyphs" >Ready</text>
<path d="M60.5 556v4.5h11v-11h-6" fill="none" stroke="#555" stroke-width="1.2"/><rect x="66" y="549.2" width="6" height="2.6" fill="#555"/><circle cx="61.9" cy="550.9" r="3" fill="#555"/>
<rect x="65.3" y="554" width="1.8" height="1" fill="#555" />
<rect x="68.3" y="554" width="1.8" height="1" fill="#555" />
<rect x="62.3" y="556.2" width="1.8" height="1" fill="#555" />
<rect x="65.3" y="556.2" width="1.8" height="1" fill="#555" />
<rect x="68.3" y="556.2" width="1.8" height="1" fill="#555" />
<rect x="62.3" y="558.4" width="1.8" height="1" fill="#555" />
<rect x="65.3" y="558.4" width="1.8" height="1" fill="#555" />
<rect x="68.3" y="558.4" width="1.8" height="1" fill="#555" />
<rect x="686" y="545" width="38" height="21" fill="#C6C6C6" />
<g fill="none" stroke="#666" stroke-width="1.2"><rect x="698.6" y="548.6" width="11.8" height="11.8"/><path d="M702.6 548.6v11.8 M706.6 548.6v11.8 M698.6 552.6h11.8 M698.6 556.6h11.8"/></g>
<g fill="none" stroke="#666" stroke-width="1.2"><rect x="736.6" y="548.6" width="12.8" height="11.8"/><rect x="739.6" y="551.6" width="6.8" height="5.8"/><path d="M741 553.6h4 M741 555.6h4"/></g>
<g fill="none" stroke="#666" stroke-width="1.2"><rect x="774.6" y="548.6" width="12.8" height="11.8"/><path d="M774.6 554.6h7v-6 M778.6 548.6v6"/></g>
<rect x="805" y="554" width="6" height="2" fill="#555" />
<rect x="815" y="554" width="100" height="1" fill="#A0A0A0" />
<rect x="863" y="548" width="4" height="12" fill="#555" />
<rect x="918" y="554" width="8" height="2" fill="#555" />
<rect x="921" y="550" width="2" height="8" fill="#555" />
<text x="938" y="557.9" font-size="12.2" fill="#444" textLength="25" lengthAdjust="spacingAndGlyphs" >100%</text>
<rect x="962" y="198" width="21" height="318" fill="#E6E6E6" />
<rect x="961" y="205" width="1" height="312" fill="#A6A6A6" />
<rect x="965.5" y="207.5" width="14" height="14" fill="#FFFFFF" stroke="#BDBDBD" stroke-width="1" />
<path d="M968.5 216.5h8l-4-4z" fill="#555"/>
<rect x="965.5" y="222.5" width="14" height="131" fill="#FFFFFF" stroke="#BDBDBD" stroke-width="1" />
<rect x="965.5" y="502.5" width="14" height="14" fill="#FFFFFF" stroke="#C8C8C8" stroke-width="1" />
<path d="M968.5 507.5h8l-4 4z" fill="#555"/>
<rect x="983" y="0" width="1" height="567" fill="#858585" />
<rect x="0" y="566" width="984" height="1" fill="#858585" />
<defs><filter id="sh" x="-5%" y="-5%" width="110%" height="110%"><feGaussianBlur stdDeviation="3"/></filter></defs>
<rect x="599" y="163" width="362" height="353" fill="#000" opacity="0.16" filter="url(#sh)"/>
<rect x="601" y="163" width="358" height="351" fill="#6F8098" />
<rect x="602" y="164" width="356" height="30" fill="#FFFFFF" />
<rect x="602" y="194" width="356" height="319" fill="#FAFAFA" />
<g fill="none" stroke="#777" stroke-width="1"><rect x="610.5" y="170.5" width="6" height="6"/><path d="M613.5 170.5v6 M610.5 173.5h6"/><rect x="619.5" y="178.5" width="6" height="6"/><path d="M622.5 178.5v6 M619.5 181.5h6"/></g><path d="M619 171.5q4 0 3.5 4 M621 174l1.5 1.8 1.5-1.8 M616.5 184q-4 0-3.5-4 M611.5 181.5l1.5-1.8 1.5 1.8" fill="none" stroke="#3F7ABE" stroke-width="1"/>
<text x="631" y="183.3" font-size="13" fill="#000" textLength="69.5" lengthAdjust="spacingAndGlyphs" >Swap Ranges</text>
<path d="M938 173.5l10 10 M948 173.5l-10 10" stroke="#000" stroke-width="1.2"/>
<text x="619" y="230" font-size="12.3" fill="#000" textLength="75" lengthAdjust="spacingAndGlyphs" >Select range 1:</text>
<rect x="702.5" y="214.5" width="237" height="23" fill="#FFFFFF" stroke="#ADADAD" stroke-width="1" />
<text x="707.7" y="229.9" font-size="12.3" fill="#000" textLength="27.4" lengthAdjust="spacingAndGlyphs" >E1:E9</text>
<rect x="920.5" y="219.5" width="14" height="13" fill="#fff" stroke="#6D6D6D" stroke-width="1"/><path d="M927.5 229v-6.5 M924.8 225l2.7-2.7 2.7 2.7 M923.5 230.2h8" fill="none" stroke="#3F7ABE" stroke-width="1.1"/>
<text x="619" y="266" font-size="12.3" fill="#000" textLength="75" lengthAdjust="spacingAndGlyphs" >Select range 2:</text>
<rect x="702.5" y="250.5" width="237" height="23" fill="#FFFFFF" stroke="#0078D7" stroke-width="1" />
<rect x="708" y="254" width="204" height="16" fill="#0078D7" />
<text x="708" y="266" font-size="12.3" fill="#FFFFFF" textLength="203.5" lengthAdjust="spacingAndGlyphs" >Project result.xlsx]Project Tracker'!E1:E9</text>
<rect x="920.5" y="255.5" width="14" height="13" fill="#fff" stroke="#6D6D6D" stroke-width="1"/><path d="M927.5 265v-6.5 M924.8 261l2.7-2.7 2.7 2.7 M923.5 266.2h8" fill="none" stroke="#3F7ABE" stroke-width="1.1"/>
<rect x="608" y="289" width="344" height="1" fill="#DADADA" />
<text x="619.2" y="318.4" font-size="12.3" fill="#000" textLength="120" lengthAdjust="spacingAndGlyphs" >Choose a paste option:</text>
<circle cx="752.4" cy="315.7" r="5.9" fill="#fff" stroke="#333" stroke-width="1.1"/>
<circle cx="752.4" cy="315.7" r="3.3" fill="#333"/>
<text x="763.1" y="320" font-size="12.3" fill="#000" textLength="111.5" lengthAdjust="spacingAndGlyphs" >Adjust cell references</text>
<circle cx="752.4" cy="339.8" r="5.9" fill="#fff" stroke="#333" stroke-width="1.1"/>
<text x="763.1" y="344" font-size="12.3" fill="#000" textLength="104" lengthAdjust="spacingAndGlyphs" >Keep cell references</text>
<circle cx="752.4" cy="363.9" r="5.9" fill="#fff" stroke="#333" stroke-width="1.1"/>
<text x="763.1" y="368" font-size="12.3" fill="#000" textLength="90" lengthAdjust="spacingAndGlyphs" >Paste values only</text>
<rect x="746.6" y="387.6" width="12" height="12" fill="#fff" stroke="#333" stroke-width="1.2"/><path d="M748 393l3.2 3.2 5.8-5.8" fill="none" stroke="#333" stroke-width="1.3"/>
<text x="763.1" y="397.8" font-size="12.3" fill="#000" textLength="103" lengthAdjust="spacingAndGlyphs" >Preserve formatting</text>
<rect x="619.9" y="423.8" width="12" height="12" fill="#fff" stroke="#333" stroke-width="1.2"/><path d="M621.3 429.2l3.2 3.2 5.8-5.8" fill="none" stroke="#333" stroke-width="1.3"/>
<text x="636.3" y="433.6" font-size="12.3" fill="#000" textLength="204.2" lengthAdjust="spacingAndGlyphs" >Create a backup copy of the worksheet</text>
<rect x="608" y="463" width="344" height="1" fill="#DADADA" />
<text x="620" y="492.4" font-size="15.5" fill="#7A7A7A" font-weight="700" textLength="60" lengthAdjust="spacingAndGlyphs" >Ablebits</text>
<path d="M686.5 485.5l3.5 3.5 3.5-3.5" fill="none" stroke="#555" stroke-width="1.3"/>
<rect x="766" y="475" width="84" height="24" fill="#2B78C5" />
<text x="808" y="491" font-size="12.3" fill="#FFFFFF" textLength="28" lengthAdjust="spacingAndGlyphs" text-anchor="middle" >Swap</text>
<rect x="856.5" y="475.5" width="83" height="23" fill="#FFFFFF" stroke="#ADADAD" stroke-width="1" />
<text x="898" y="491" font-size="12.3" fill="#000" textLength="36" lengthAdjust="spacingAndGlyphs" text-anchor="middle" >Cancel</text>
</svg>
</body></html>
